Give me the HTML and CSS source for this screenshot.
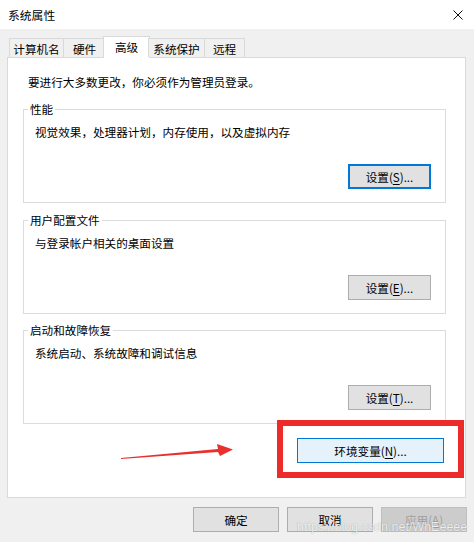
FILE: index.html
```html
<!DOCTYPE html>
<html lang="zh-CN">
<head>
<meta charset="utf-8">
<title>系统属性</title>
<link rel="stylesheet" href="styles.css">
</head>
<body>
<div class="window">
  <div class="titlebar">
    <span class="title">系统属性</span>
    <svg class="close" width="10" height="10" viewBox="0 0 10 10"><path d="M0.5 0.5L9.5 9.5M9.5 0.5L0.5 9.5" stroke="#111" stroke-width="1" fill="none"/></svg>
  </div>
  <div class="content">
    <div class="tabs">
      <div class="tab t1">计算机名</div>
      <div class="tab t2">硬件</div>
      <div class="tab active">高级</div>
      <div class="tab t4">系统保护</div>
      <div class="tab t5">远程</div>
    </div>
    <div class="panel">
      <div class="intro">要进行大多数更改，你必须作为管理员登录。</div>
      <fieldset class="group">
        <legend>性能</legend>
        <div class="desc">视觉效果，处理器计划，内存使用，以及虚拟内存</div>
        <div class="btn-row"><button class="btn focused">设置(<u>S</u>)...</button></div>
      </fieldset>
      <fieldset class="group">
        <legend>用户配置文件</legend>
        <div class="desc">与登录帐户相关的桌面设置</div>
        <div class="btn-row"><button class="btn">设置(<u>E</u>)...</button></div>
      </fieldset>
      <fieldset class="group">
        <legend>启动和故障恢复</legend>
        <div class="desc">系统启动、系统故障和调试信息</div>
        <div class="btn-row"><button class="btn">设置(<u>T</u>)...</button></div>
      </fieldset>
      <div class="env-row"><button class="btn env">环境变量(<u>N</u>)...</button></div>
    </div>
    <div class="footer">
      <button class="btn wide">确定</button>
      <button class="btn wide">取消</button>
      <button class="btn wide disabled">应用(<u>A</u>)</button>
    </div>
  </div>
  <div class="highlight"></div>
  <svg class="arrow" width="120" height="20" viewBox="0 0 120 20">
    <polygon points="0,14 97,5 96,0 112,5.5 99,12 97,8 0,15" fill="#e8302f"/>
  </svg>
  <div class="watermark">https://blog.csdn.net/WhEeeee</div>
</div>
</body>
</html>
```
FILE: styles.css
```css
* { box-sizing: border-box; }
html, body { margin: 0; padding: 0; }
body {
  font-family: "Noto Sans CJK SC", "Microsoft YaHei", sans-serif;
  font-size: 11.6px;
  color: #000;
  background: #f0f0f0;
}
.window {
  position: relative;
  width: 474px;
  height: 542px;
  overflow: hidden;
  background: #f0f0f0;
}
.titlebar {
  height: 29px;
  background: #fff;
  display: flex;
  align-items: center;
  justify-content: space-between;
  padding: 0 11px 0 8px;
  line-height: 16px;
}
.title { font-size: 11.8px; }
.close { display: block; }
.content {
  padding: 7px 8px 0 7px;
}
.tabs {
  display: flex;
  align-items: flex-end;
  height: 22px;
  margin-bottom: -1px;
  padding-left: 2px;
  position: relative;
  z-index: 1;
}
.tab {
  height: 19px;
  margin-bottom: 1px;
  border: 1px solid #d9d9d9;
  border-bottom: none;
  background: #f0f0f0;
  display: flex;
  align-items: center;
  justify-content: center;
  line-height: 16px;
  padding-top: 1px;
}
.t1 { width: 55px; }
.t2 { width: 43px; margin-left: -1px; }
.tab.active {
  width: 47px;
  height: 22px;
  margin-left: -3px;
  margin-bottom: 0;
  background: #fff;
  padding-top: 0;
  padding-bottom: 2px;
}
.t4 { width: 57px; margin-left: -2px; }
.t5 { width: 41px; margin-left: -1px; }
.panel {
  width: 459px;
  height: 441px;
  background: #fff;
  border: 1px solid #d9d9d9;
  padding: 16px 0 0 15px;
}
.intro {
  line-height: 16px;
  margin-left: 5px;
}
.group {
  width: 423px;
  margin: 11px 0 0 0;
  padding: 7px 14px 13px 0;
  border: 1px solid #dcdcdc;
  min-inline-size: 0;
}
.group + .group { margin-top: 9px; }
.group:last-of-type { margin-top: 8px; }
.group legend {
  padding: 0 2px;
  margin-left: 4px;
  line-height: 16px;
  font-size: 11.6px;
}
.desc {
  line-height: 16px;
  margin-left: 11px;
}
.btn-row {
  display: flex;
  justify-content: flex-end;
  margin-top: 24px;
}
.btn {
  font-family: inherit;
  font-size: 11.6px;
  color: #000;
  height: 25px;
  width: 83px;
  background: #e1e1e1;
  border: 1px solid #adadad;
  padding: 0;
  margin: 0;
  line-height: 16px;
}
.btn u { text-decoration-thickness: 1px; text-underline-offset: 2px; }
.btn.focused {
  border: 2px solid #0078d7;
}
.env-row {
  display: flex;
  justify-content: flex-end;
  margin-top: 14px;
  padding-right: 21px;
}
.btn.env {
  width: 147px;
  background: #e5f1fb;
  border: 1px solid #0078d7;
}
.footer {
  display: flex;
  justify-content: flex-end;
  gap: 8px;
  margin-top: 9px;
  margin-right: -1px;
}
.btn.wide { width: 86px; }
.btn.disabled {
  background: #cccccc;
  border-color: #bfbfbf;
  color: #a0a0a0;
}
.highlight {
  position: absolute;
  left: 277px;
  top: 420px;
  width: 187px;
  height: 58px;
  border: 6px solid #ee2b2b;
}
.arrow {
  position: absolute;
  left: 121px;
  top: 444px;
}
.watermark {
  position: absolute;
  left: 297px;
  top: 519px;
  font-family: "Liberation Sans", Arial, sans-serif;
  font-size: 12.5px;
  line-height: 17px;
  color: rgba(255, 255, 255, 0.85);
  text-shadow: 0 0 1px rgba(0, 0, 0, 0.35);
  white-space: nowrap;
}
```
